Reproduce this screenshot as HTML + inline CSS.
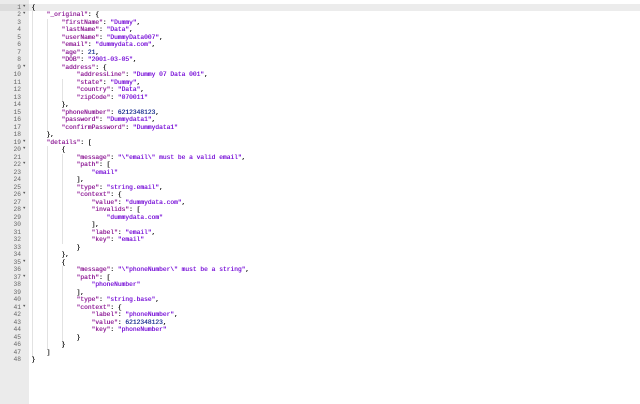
<!DOCTYPE html>
<html><head><style>
html,body{margin:0;padding:0;width:640px;height:404px;overflow:hidden;background:#fff}
.g{position:absolute;left:0;top:0;width:29px;height:404px;background:#ebebeb}
.hl{position:absolute;left:29px;top:3.5px;width:611px;height:7.5px;background:#ececec}
.ghl{position:absolute;left:0;top:3.5px;width:29px;height:7.5px;background:#dcdcdc}
pre{margin:0;position:absolute;top:3.5px;font-family:"Liberation Mono",monospace;font-size:6.25px;line-height:7.5px;}
.n{left:0;width:21px;text-align:right;color:#666}
.f{left:23px;color:#555;font-size:4px}
.c{left:31.5px;color:#111;text-shadow:0.25px 0 0 currentColor}
.k{color:#8e1c96}.s{color:#7a14d8}.d{color:#1a2f90}
.ig{position:absolute;width:0;border-left:1px solid #e2e2e2}
</style></head><body>
<div class="g"></div><div class="ghl"></div><div class="hl"></div>
<div class="ig" style="left:32px;top:11px;height:347px"></div>
<div class="ig" style="left:47px;top:18.5px;height:112px"></div>
<div class="ig" style="left:47px;top:146px;height:203px"></div>
<div class="ig" style="left:62px;top:78.5px;height:22px"></div>
<div class="ig" style="left:62px;top:153.5px;height:90px"></div>
<div class="ig" style="left:62px;top:266px;height:82px"></div>
<pre class="n">1
2
3
4
5
6
7
8
9
10
11
12
13
14
15
16
17
18
19
20
21
22
23
24
25
26
27
28
29
30
31
32
33
34
35
36
37
38
39
40
41
42
43
44
45
46
47
48</pre>
<pre class="f" style="line-height:7.5px;font-size:4px">▼
▼






▼









▼
▼

▼



▼

▼






▼

▼



▼</pre>
<pre class="c">{
    <span class="k">"_original"</span>: {
        <span class="k">"firstName"</span>: <span class="s">"Dummy"</span>,
        <span class="k">"lastName"</span>: <span class="s">"Data"</span>,
        <span class="k">"userName"</span>: <span class="s">"DummyData007"</span>,
        <span class="k">"email"</span>: <span class="s">"dummydata.com"</span>,
        <span class="k">"age"</span>: <span class="d">21</span>,
        <span class="k">"DOB"</span>: <span class="s">"2001-03-05"</span>,
        <span class="k">"address"</span>: {
            <span class="k">"addressLine"</span>: <span class="s">"Dummy 07 Data 001"</span>,
            <span class="k">"state"</span>: <span class="s">"Dummy"</span>,
            <span class="k">"country"</span>: <span class="s">"Data"</span>,
            <span class="k">"zipCode"</span>: <span class="s">"070011"</span>
        },
        <span class="k">"phoneNumber"</span>: <span class="d">6212348123</span>,
        <span class="k">"password"</span>: <span class="s">"Dummydata1"</span>,
        <span class="k">"confirmPassword"</span>: <span class="s">"Dummydata1"</span>
    },
    <span class="k">"details"</span>: [
        {
            <span class="k">"message"</span>: <span class="s">"\"email\" must be a valid email"</span>,
            <span class="k">"path"</span>: [
                <span class="s">"email"</span>
            ],
            <span class="k">"type"</span>: <span class="s">"string.email"</span>,
            <span class="k">"context"</span>: {
                <span class="k">"value"</span>: <span class="s">"dummydata.com"</span>,
                <span class="k">"invalids"</span>: [
                    <span class="s">"dummydata.com"</span>
                ],
                <span class="k">"label"</span>: <span class="s">"email"</span>,
                <span class="k">"key"</span>: <span class="s">"email"</span>
            }
        },
        {
            <span class="k">"message"</span>: <span class="s">"\"phoneNumber\" must be a string"</span>,
            <span class="k">"path"</span>: [
                <span class="s">"phoneNumber"</span>
            ],
            <span class="k">"type"</span>: <span class="s">"string.base"</span>,
            <span class="k">"context"</span>: {
                <span class="k">"label"</span>: <span class="s">"phoneNumber"</span>,
                <span class="k">"value"</span>: <span class="d">6212348123</span>,
                <span class="k">"key"</span>: <span class="s">"phoneNumber"</span>
            }
        }
    ]
}</pre>
</body></html>
